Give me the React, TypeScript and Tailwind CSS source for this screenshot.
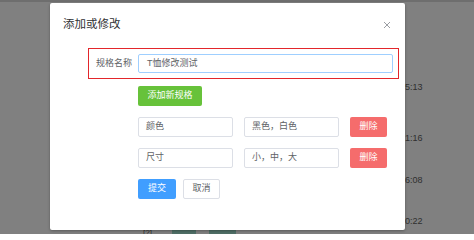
import { FC } from 'react';

interface SpecRow {
  name: string;
  values: string;
}

const rows: SpecRow[] = [
  { name: '颜色', values: '黑色，白色' },
  { name: '尺寸', values: '小，中，大' },
];

const times = ['5:13', '1:16', '6:08', '0:22'];

const font = { fontFamily: '"Liberation Sans", "Noto Sans CJK SC", sans-serif' };

const CloseIcon: FC = () => (
  <svg width="8" height="8" viewBox="0 0 8 8" className="text-[#909399]">
    <path d="M1 1L7 7M7 1L1 7" stroke="currentColor" strokeWidth="0.9" fill="none" />
  </svg>
);

const TextBox: FC<{ value: string; className?: string }> = ({ value, className = '' }) => (
  <div
    className={`h-[20px] flex items-center pl-[7px] rounded-[2px] border border-[#dcdfe6] bg-white text-[9px] text-[#606266] ${className}`}
  >
    {value}
  </div>
);

const Dialog: FC = () => {
  return (
    <div className="absolute left-[50px] top-[3px] w-[355px] h-[227px] bg-white rounded-[2px] shadow-[0_1px_3px_rgba(0,0,0,0.3)]">
      <div className="flex items-center justify-between pl-[13px] pr-[14px] pt-[8px] h-[36px]">
        <span className="text-[11.5px] text-[#303133]">添加或修改</span>
        <CloseIcon />
      </div>

      <div className="ml-[38px] mt-[9px] w-[311px] h-[31px] border-[1.5px] border-[#e3262b] flex items-center pr-[5px]">
        <span className="w-[43px] text-right text-[9px] text-[#606266]">规格名称</span>
        <div className="ml-[6px] flex-1 h-[19px] flex items-center pl-[8px] rounded-[2px] border border-[#9fcfff] text-[9px] text-[#606266]">
          T恤修改测试
        </div>
      </div>

      <div className="ml-[88px] mt-[7px] flex flex-col gap-[11px]">
        <button className="w-[64px] h-[20px] rounded-[2px] bg-[#67c23a] text-white text-[9px]">
          添加新规格
        </button>
        {rows.map((row, i) => (
          <div key={i} className="flex items-center gap-[11px]">
            <TextBox value={row.name} className="w-[95px]" />
            <TextBox value={row.values} className="w-[95px]" />
            <button className="w-[37px] h-[20px] rounded-[2px] bg-[#f56c6c] text-white text-[9px]">
              删除
            </button>
          </div>
        ))}
        <div className="flex gap-[7px]">
          <button className="w-[38px] h-[20px] rounded-[2px] bg-[#409eff] text-white text-[9px]">
            提交
          </button>
          <button className="w-[37px] h-[20px] rounded-[2px] bg-white border border-[#dcdfe6] text-[#606266] text-[9px]">
            取消
          </button>
        </div>
      </div>
    </div>
  );
};

const App: FC = () => {
  return (
    <div className="relative w-[474px] h-[234px] bg-[#808080] overflow-hidden" style={font}>
      <div className="h-[2px] bg-[#6e6e6e]" />
      <div className="flex">
        <div className="w-[405px]" />
        <div className="flex flex-col pt-[79px] text-[9px] text-[#2f2f2f]">
          {times.map((t, i) => (
            <div key={i} className={`h-[10px] ${i === 0 ? 'mb-[41px]' : i === 1 ? 'mb-[32px]' : 'mb-[31px]'}`}>
              {t}
            </div>
          ))}
        </div>
      </div>
      <div className="absolute left-0 bottom-0 w-full h-[4px] flex items-start">
        <span className="ml-[143px] text-[8px] leading-[8px] -mt-[1px] text-[#2f2f2f]">[?]</span>
        <div className="ml-[20px] w-[24px] h-[4px] bg-[#4f6f66]" />
        <div className="ml-[13px] w-[27px] h-[4px] bg-[#4f6f66]" />
      </div>
      <Dialog />
    </div>
  );
};

export default App;
